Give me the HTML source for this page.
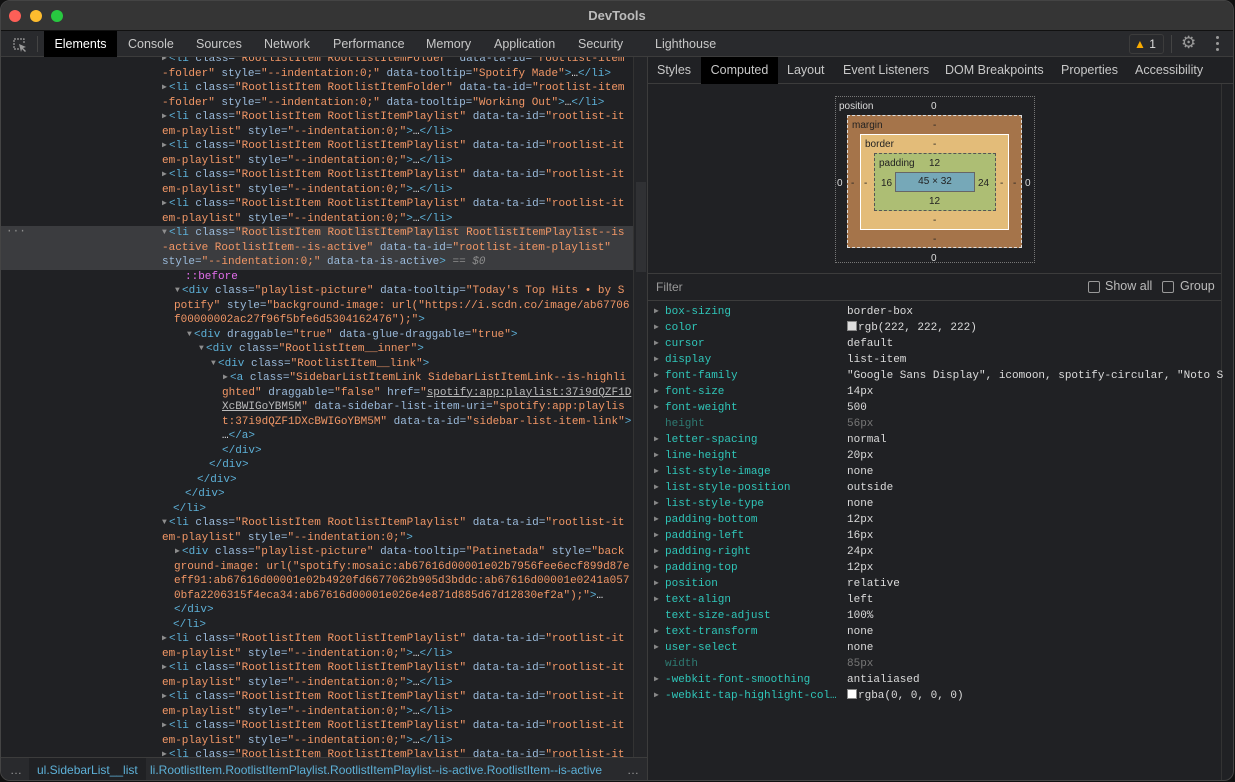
<!DOCTYPE html>
<html><head><meta charset="utf-8"><style>
*{margin:0;padding:0;box-sizing:border-box}
body{width:1235px;height:782px;background:#111;overflow:hidden;font-family:"Liberation Sans",sans-serif;position:relative}
.win{position:absolute;left:0;top:0;width:1234px;height:781px;background:#202124;border-radius:10px;overflow:hidden;border:1px solid #444}
.title{position:absolute;left:0;top:0;width:100%;height:30px;background:#353535;border-bottom:1px solid #111;color:#bcbcbc;font-weight:bold;font-size:13px;text-align:center;line-height:30px}
.dot{position:absolute;top:9px;width:12px;height:12px;border-radius:50%}
.tabs{position:absolute;left:0;top:30px;width:100%;height:26px;background:#292a2d;border-bottom:1px solid #3c3c3c}
.tab{position:absolute;top:0;height:26px;line-height:26px;font-size:12.5px;color:#c8c8c8}
.sel{background:#000;color:#fff;text-align:center}
.left{position:absolute;left:0;top:56px;width:632px;height:700px;overflow:hidden;font-family:"Liberation Mono",monospace;font-size:11px;color:#e8eaed}
.l{position:absolute;white-space:pre;line-height:14.5px;height:14.5px}
.t{color:#5db0d7}.a{color:#9bbbdc}.v{color:#f29766}.g{color:#8e8e8e}
.ar{color:#8e8e8e;font-size:8px;display:inline-block;width:7px;position:relative;top:-1px}
.sb{position:absolute;left:632px;top:56px;width:14px;height:700px;background:#242528;border-left:1px solid #333}
.right{position:absolute;left:646px;top:56px;width:588px;height:726px;border-left:1px solid #3c3c3c}
.sub{position:absolute;left:0;top:0;width:100%;height:27px;border-bottom:1px solid #3c3c3c}
.st{position:absolute;top:0;height:27px;line-height:27px;font-size:12.5px;color:#c8c8c8}
.bm{position:absolute;font-size:10px;color:#222}
.cp{position:absolute;font-family:"Liberation Mono",monospace;font-size:11px;line-height:16px;white-space:pre}
.n{color:#2fc6b9}.val{color:#dcdcdc}
.bc{position:absolute;left:0;top:756px;width:646px;height:26px;background:#292a2d;border-top:1px solid #3c3c3c;font-size:12px;line-height:24px;white-space:nowrap}
</style></head><body>
<div class="win">
<div class="title">DevTools
<div class="dot" style="left:8px;background:#fe5f57"></div>
<div class="dot" style="left:29px;background:#febc2e"></div>
<div class="dot" style="left:50px;background:#28c840"></div>
</div>
<div class="tabs">
<svg style="position:absolute;left:11px;top:6px" width="16" height="16" viewBox="0 0 16 16"><path d="M7 12H2V2h10v5" fill="none" stroke="#9a9a9a" stroke-width="1.2" stroke-dasharray="2 1"/><path d="M7 7l7 3-3 1 3 3-1 1-3-3-1 3z" fill="#9a9a9a"/></svg>
<div style="position:absolute;left:36px;top:5px;width:1px;height:16px;background:#444"></div>
<div class="tab sel" style="left:43px;width:73px">Elements</div>
<div class="tab" style="left:127px">Console</div>
<div class="tab" style="left:195px">Sources</div>
<div class="tab" style="left:263px">Network</div>
<div class="tab" style="left:332px">Performance</div>
<div class="tab" style="left:425px">Memory</div>
<div class="tab" style="left:493px">Application</div>
<div class="tab" style="left:577px">Security</div>
<div class="tab" style="left:654px">Lighthouse</div>
<div style="position:absolute;left:1128px;top:3px;width:35px;height:20px;border:1px solid #3c3c3c;border-radius:3px;font-size:12px;color:#ddd;line-height:18px;padding-left:4px"><span style="color:#f9ab00">▲</span> 1</div>
<div style="position:absolute;left:1170px;top:4px;width:1px;height:18px;background:#444"></div>
<div style="position:absolute;left:1180px;top:2px;font-size:17px;color:#999">⚙</div>
<div style="position:absolute;left:1215px;top:5px;width:3px;line-height:5px;font-size:0">
<div style="width:3px;height:3px;background:#999;border-radius:50%;margin-bottom:3px"></div><div style="width:3px;height:3px;background:#999;border-radius:50%;margin-bottom:3px"></div><div style="width:3px;height:3px;background:#999;border-radius:50%"></div></div>
</div>

<div class="left">
<div style="position:absolute;left:0;top:169px;width:632px;height:44px;background:#3b3c3f"></div>
<div class="l g" style="left:5px;top:168px">···</div>
<div class="l" style="left:161px;top:-5px"><span class="ar">▶</span><span class="t">&lt;li</span> <span class="a">class=</span><span class="v">"RootlistItem RootlistItemFolder"</span> <span class="a">data-ta-id=</span><span class="v">"rootlist-item</span></div>
<div class="l" style="left:161px;top:9.5px"><span class="v">-folder"</span> <span class="a">style=</span><span class="v">"--indentation:0;"</span> <span class="a">data-tooltip=</span><span class="v">"Spotify Made"</span><span class="t">&gt;</span>…<span class="t">&lt;/li&gt;</span></div>
<div class="l" style="left:161px;top:24px"><span class="ar">▶</span><span class="t">&lt;li</span> <span class="a">class=</span><span class="v">"RootlistItem RootlistItemFolder"</span> <span class="a">data-ta-id=</span><span class="v">"rootlist-item</span></div>
<div class="l" style="left:161px;top:38.5px"><span class="v">-folder"</span> <span class="a">style=</span><span class="v">"--indentation:0;"</span> <span class="a">data-tooltip=</span><span class="v">"Working Out"</span><span class="t">&gt;</span>…<span class="t">&lt;/li&gt;</span></div>
<div class="l" style="left:161px;top:53px"><span class="ar">▶</span><span class="t">&lt;li</span> <span class="a">class=</span><span class="v">"RootlistItem RootlistItemPlaylist"</span> <span class="a">data-ta-id=</span><span class="v">"rootlist-it</span></div>
<div class="l" style="left:161px;top:67.5px"><span class="v">em-playlist"</span> <span class="a">style=</span><span class="v">"--indentation:0;"</span><span class="t">&gt;</span>…<span class="t">&lt;/li&gt;</span></div>
<div class="l" style="left:161px;top:82px"><span class="ar">▶</span><span class="t">&lt;li</span> <span class="a">class=</span><span class="v">"RootlistItem RootlistItemPlaylist"</span> <span class="a">data-ta-id=</span><span class="v">"rootlist-it</span></div>
<div class="l" style="left:161px;top:96.5px"><span class="v">em-playlist"</span> <span class="a">style=</span><span class="v">"--indentation:0;"</span><span class="t">&gt;</span>…<span class="t">&lt;/li&gt;</span></div>
<div class="l" style="left:161px;top:111px"><span class="ar">▶</span><span class="t">&lt;li</span> <span class="a">class=</span><span class="v">"RootlistItem RootlistItemPlaylist"</span> <span class="a">data-ta-id=</span><span class="v">"rootlist-it</span></div>
<div class="l" style="left:161px;top:125.5px"><span class="v">em-playlist"</span> <span class="a">style=</span><span class="v">"--indentation:0;"</span><span class="t">&gt;</span>…<span class="t">&lt;/li&gt;</span></div>
<div class="l" style="left:161px;top:140px"><span class="ar">▶</span><span class="t">&lt;li</span> <span class="a">class=</span><span class="v">"RootlistItem RootlistItemPlaylist"</span> <span class="a">data-ta-id=</span><span class="v">"rootlist-it</span></div>
<div class="l" style="left:161px;top:154.5px"><span class="v">em-playlist"</span> <span class="a">style=</span><span class="v">"--indentation:0;"</span><span class="t">&gt;</span>…<span class="t">&lt;/li&gt;</span></div>
<div class="l" style="left:161px;top:169px"><span class="ar">▼</span><span class="t">&lt;li</span> <span class="a">class=</span><span class="v">"RootlistItem RootlistItemPlaylist RootlistItemPlaylist--is</span></div>
<div class="l" style="left:161px;top:183.5px"><span class="v">-active RootlistItem--is-active"</span> <span class="a">data-ta-id=</span><span class="v">"rootlist-item-playlist"</span></div>
<div class="l" style="left:161px;top:198px"><span class="a">style=</span><span class="v">"--indentation:0;"</span> <span class="a">data-ta-is-active</span><span class="t">&gt;</span> <span class="g">== <i>$0</i></span></div>
<div class="l" style="left:184px;top:212.5px;color:#e36eec">::before</div>
<div class="l" style="left:174px;top:227px"><span class="ar">▼</span><span class="t">&lt;div</span> <span class="a">class=</span><span class="v">"playlist-picture"</span> <span class="a">data-tooltip=</span><span class="v">"Today's Top Hits • by S</span></div>
<div class="l" style="left:173px;top:241.5px"><span class="v">potify"</span> <span class="a">style=</span><span class="v">"background-image: url("https://i.scdn.co/image/ab67706</span></div>
<div class="l" style="left:173px;top:256px"><span class="v">f00000002ac27f96f5bfe6d5304162476");"</span><span class="t">&gt;</span></div>
<div class="l" style="left:186px;top:270.5px"><span class="ar">▼</span><span class="t">&lt;div</span> <span class="a">draggable=</span><span class="v">"true"</span> <span class="a">data-glue-draggable=</span><span class="v">"true"</span><span class="t">&gt;</span></div>
<div class="l" style="left:198px;top:285px"><span class="ar">▼</span><span class="t">&lt;div</span> <span class="a">class=</span><span class="v">"RootlistItem__inner"</span><span class="t">&gt;</span></div>
<div class="l" style="left:210px;top:299.5px"><span class="ar">▼</span><span class="t">&lt;div</span> <span class="a">class=</span><span class="v">"RootlistItem__link"</span><span class="t">&gt;</span></div>
<div class="l" style="left:222px;top:314px"><span class="ar">▶</span><span class="t">&lt;a</span> <span class="a">class=</span><span class="v">"SidebarListItemLink SidebarListItemLink--is-highli</span></div>
<div class="l" style="left:221px;top:328.5px"><span class="v">ghted"</span> <span class="a">draggable=</span><span class="v">"false"</span> <span class="a">href=</span><span class="v">"</span><span style="color:#bbb;text-decoration:underline">spotify:app:playlist:37i9dQZF1D</span></div>
<div class="l" style="left:221px;top:343px"><span style="color:#bbb;text-decoration:underline">XcBWIGoYBM5M</span><span class="v">"</span> <span class="a">data-sidebar-list-item-uri=</span><span class="v">"spotify:app:playlis</span></div>
<div class="l" style="left:221px;top:357.5px"><span class="v">t:37i9dQZF1DXcBWIGoYBM5M"</span> <span class="a">data-ta-id=</span><span class="v">"sidebar-list-item-link"</span><span class="t">&gt;</span></div>
<div class="l" style="left:221px;top:372px">…<span class="t">&lt;/a&gt;</span></div>
<div class="l t" style="left:221px;top:386.5px">&lt;/div&gt;</div>
<div class="l t" style="left:208px;top:401px">&lt;/div&gt;</div>
<div class="l t" style="left:196px;top:415.5px">&lt;/div&gt;</div>
<div class="l t" style="left:184px;top:430px">&lt;/div&gt;</div>
<div class="l t" style="left:172px;top:444.5px">&lt;/li&gt;</div>
<div class="l" style="left:161px;top:459px"><span class="ar">▼</span><span class="t">&lt;li</span> <span class="a">class=</span><span class="v">"RootlistItem RootlistItemPlaylist"</span> <span class="a">data-ta-id=</span><span class="v">"rootlist-it</span></div>
<div class="l" style="left:161px;top:473.5px"><span class="v">em-playlist"</span> <span class="a">style=</span><span class="v">"--indentation:0;"</span><span class="t">&gt;</span></div>
<div class="l" style="left:174px;top:488px"><span class="ar">▶</span><span class="t">&lt;div</span> <span class="a">class=</span><span class="v">"playlist-picture"</span> <span class="a">data-tooltip=</span><span class="v">"Patinetada"</span> <span class="a">style=</span><span class="v">"back</span></div>
<div class="l" style="left:173px;top:502.5px"><span class="v">ground-image: url("spotify:mosaic:ab67616d00001e02b7956fee6ecf899d87e</span></div>
<div class="l" style="left:173px;top:517px"><span class="v">eff91:ab67616d00001e02b4920fd6677062b905d3bddc:ab67616d00001e0241a057</span></div>
<div class="l" style="left:173px;top:531.5px"><span class="v">0bfa2206315f4eca34:ab67616d00001e026e4e871d885d67d12830ef2a");"</span><span class="t">&gt;</span>…</div>
<div class="l t" style="left:173px;top:546px">&lt;/div&gt;</div>
<div class="l t" style="left:172px;top:560.5px">&lt;/li&gt;</div>
<div class="l" style="left:161px;top:575px"><span class="ar">▶</span><span class="t">&lt;li</span> <span class="a">class=</span><span class="v">"RootlistItem RootlistItemPlaylist"</span> <span class="a">data-ta-id=</span><span class="v">"rootlist-it</span></div>
<div class="l" style="left:161px;top:589.5px"><span class="v">em-playlist"</span> <span class="a">style=</span><span class="v">"--indentation:0;"</span><span class="t">&gt;</span>…<span class="t">&lt;/li&gt;</span></div>
<div class="l" style="left:161px;top:604px"><span class="ar">▶</span><span class="t">&lt;li</span> <span class="a">class=</span><span class="v">"RootlistItem RootlistItemPlaylist"</span> <span class="a">data-ta-id=</span><span class="v">"rootlist-it</span></div>
<div class="l" style="left:161px;top:618.5px"><span class="v">em-playlist"</span> <span class="a">style=</span><span class="v">"--indentation:0;"</span><span class="t">&gt;</span>…<span class="t">&lt;/li&gt;</span></div>
<div class="l" style="left:161px;top:633px"><span class="ar">▶</span><span class="t">&lt;li</span> <span class="a">class=</span><span class="v">"RootlistItem RootlistItemPlaylist"</span> <span class="a">data-ta-id=</span><span class="v">"rootlist-it</span></div>
<div class="l" style="left:161px;top:647.5px"><span class="v">em-playlist"</span> <span class="a">style=</span><span class="v">"--indentation:0;"</span><span class="t">&gt;</span>…<span class="t">&lt;/li&gt;</span></div>
<div class="l" style="left:161px;top:662px"><span class="ar">▶</span><span class="t">&lt;li</span> <span class="a">class=</span><span class="v">"RootlistItem RootlistItemPlaylist"</span> <span class="a">data-ta-id=</span><span class="v">"rootlist-it</span></div>
<div class="l" style="left:161px;top:676.5px"><span class="v">em-playlist"</span> <span class="a">style=</span><span class="v">"--indentation:0;"</span><span class="t">&gt;</span>…<span class="t">&lt;/li&gt;</span></div>
<div class="l" style="left:161px;top:691px"><span class="ar">▶</span><span class="t">&lt;li</span> <span class="a">class=</span><span class="v">"RootlistItem RootlistItemPlaylist"</span> <span class="a">data-ta-id=</span><span class="v">"rootlist-it</span></div>
</div>
<div class="sb"><div style="position:absolute;left:2px;top:125px;width:10px;height:90px;background:#303134"></div></div>

<div class="right">
<div class="sub">
<div class="st" style="left:9px">Styles</div>
<div class="st sel" style="left:53px;width:77px">Computed</div>
<div class="st" style="left:139px">Layout</div>
<div class="st" style="left:195px">Event Listeners</div>
<div class="st" style="left:297px">DOM Breakpoints</div>
<div class="st" style="left:413px">Properties</div>
<div class="st" style="left:487px">Accessibility</div>
</div>
<div style="position:absolute;left:573px;top:27px;width:1px;height:699px;background:#333"></div>
<div style="position:absolute;left:187px;top:39px;width:200px;height:167px;border:1px dotted #777"></div>
<div class="bm" style="left:191px;top:44px;color:#ddd">position</div>
<div class="bm" style="left:283px;top:44px;color:#ddd">0</div>
<div class="bm" style="left:189px;top:121px;color:#ddd">0</div>
<div class="bm" style="left:377px;top:121px;color:#ddd">0</div>
<div class="bm" style="left:283px;top:196px;color:#ddd">0</div>
<div style="position:absolute;left:199px;top:58px;width:175px;height:133px;background:#a5744a;border:1px dashed #ddd"></div>
<div class="bm" style="left:204px;top:63px">margin</div>
<div class="bm" style="left:285px;top:63px">-</div>
<div class="bm" style="left:203px;top:121px">-</div>
<div class="bm" style="left:365px;top:121px">-</div>
<div class="bm" style="left:285px;top:177px">-</div>
<div style="position:absolute;left:212px;top:77px;width:149px;height:96px;background:#e3bc79;border:1px solid #fff"></div>
<div class="bm" style="left:217px;top:82px">border</div>
<div class="bm" style="left:285px;top:82px">-</div>
<div class="bm" style="left:216px;top:121px">-</div>
<div class="bm" style="left:352px;top:121px">-</div>
<div class="bm" style="left:285px;top:158px">-</div>
<div style="position:absolute;left:226px;top:96px;width:122px;height:58px;background:#adbe74;border:1px dashed #555"></div>
<div class="bm" style="left:231px;top:101px">padding</div>
<div class="bm" style="left:281px;top:101px">12</div>
<div class="bm" style="left:233px;top:121px">16</div>
<div class="bm" style="left:330px;top:121px">24</div>
<div class="bm" style="left:281px;top:139px">12</div>
<div style="position:absolute;left:247px;top:115px;width:80px;height:20px;background:#76a8b8;border:1px solid #666;font-size:10px;color:#222;text-align:center;line-height:18px">45 × 32</div>
<div style="position:absolute;left:0;top:216px;width:573px;height:1px;background:#3c3c3c"></div>
<div style="position:absolute;left:8px;top:223px;font-size:12px;color:#999">Filter</div>
<div style="position:absolute;left:440px;top:224px;width:12px;height:12px;border:1px solid #999;border-radius:2px"></div>
<div style="position:absolute;left:457px;top:222px;font-size:12.5px;color:#bbb">Show all</div>
<div style="position:absolute;left:514px;top:224px;width:12px;height:12px;border:1px solid #999;border-radius:2px"></div>
<div style="position:absolute;left:532px;top:222px;font-size:12.5px;color:#bbb">Group</div>
<div style="position:absolute;left:0;top:243px;width:573px;height:1px;background:#3c3c3c"></div>
<div class="cp" style="left:6px;top:247px;color:#888;font-size:8px;line-height:16px">▶
▶
▶
▶
▶
▶
▶

▶
▶
▶
▶
▶
▶
▶
▶
▶
▶
▶

▶
▶

▶
▶</div>
<div class="cp n" style="left:17px;top:247px">box-sizing
color
cursor
display
font-family
font-size
font-weight
<span style="color:#2e7a72">height</span>
letter-spacing
line-height
list-style-image
list-style-position
list-style-type
padding-bottom
padding-left
padding-right
padding-top
position
text-align
text-size-adjust
text-transform
user-select
<span style="color:#2e7a72">width</span>
-webkit-font-smoothing
-webkit-tap-highlight-col…</div>
<div class="cp val" style="left:199px;top:247px">border-box
<span style="display:inline-block;width:10px;height:10px;background:#dedede;border:1px solid #888;vertical-align:-1px;margin-right:1px"></span>rgb(222, 222, 222)
default
list-item
"Google Sans Display", icomoon, spotify-circular, "Noto S
14px
500
<span style="color:#777">56px</span>
normal
20px
none
outside
none
12px
16px
24px
12px
relative
left
100%
none
none
<span style="color:#777">85px</span>
antialiased
<span style="display:inline-block;width:10px;height:10px;background:#fff;border:1px solid #888;vertical-align:-1px;margin-right:1px"></span>rgba(0, 0, 0, 0)</div>
</div>

<div class="bc">
<span style="position:absolute;left:9px;color:#999">…</span>
<span style="position:absolute;left:28px;top:0;height:24px;padding:0 8px;background:#202124;color:#5db0d7">ul.SidebarList__list</span>
<span style="position:absolute;left:149px;color:#5db0d7">li.RootlistItem.RootlistItemPlaylist.RootlistItemPlaylist--is-active.RootlistItem--is-active</span>
<span style="position:absolute;left:626px;color:#999">…</span>
</div>
</div>
</body></html>
